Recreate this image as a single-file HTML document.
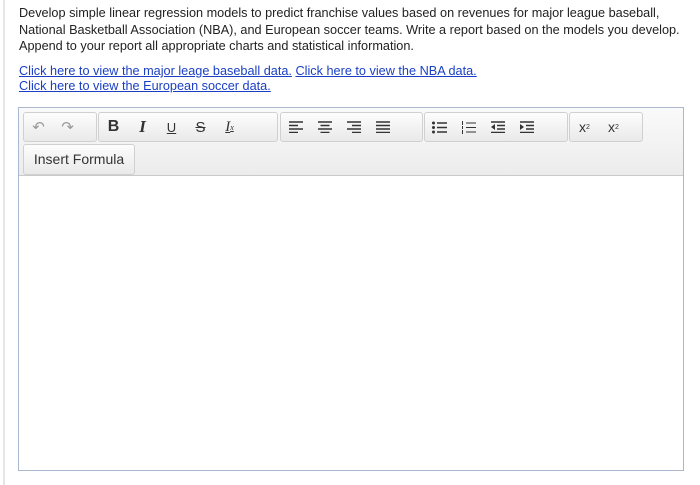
<!DOCTYPE html>
<html><head><style>
body{margin:0;width:700px;height:485px;background:#fff;position:relative;overflow:hidden;font-family:"Liberation Sans",Arial,sans-serif;}
.lb{position:absolute;left:3px;top:0;width:2px;height:485px;background:#e6e6e6}
.txt{position:absolute;left:19px;top:5px;font-size:12.7px;line-height:16.5px;color:#222;white-space:nowrap}
.links{position:absolute;left:19px;top:64px;font-size:12.7px;line-height:15px;color:#1a3fc4;white-space:nowrap}
.links span{text-decoration:underline}
.ed{position:absolute;left:18px;top:107px;width:664px;height:362px;border:1px solid #a9b8cc;background:#fff}
.tb{position:absolute;left:0;top:0;width:664px;height:67px;background:linear-gradient(#fafafa,#ececec);border-bottom:1px solid #c9c9c9}
.g{position:absolute;top:4px;height:28px;border:1px solid #d0d0d0;border-radius:3px;background:linear-gradient(#fdfdfd,#e9e9e9);display:flex;font-size:15px;color:#333}
.g div{width:29px;height:28px;display:flex;align-items:center;justify-content:center}
.f{position:absolute;left:4px;top:36px;width:110px;height:29px;border:1px solid #d0d0d0;border-radius:3px;background:linear-gradient(#fdfdfd,#e9e9e9);font-size:14px;color:#333;line-height:29px;text-align:center}
svg{display:block}
</style></head><body>
<div class="lb"></div>
<div class="txt">Develop simple linear regression models to predict franchise values based on revenues for major league baseball,<br>National Basketball Association (NBA), and European soccer teams. Write a report based on the models you develop.<br>Append to your report all appropriate charts and statistical information.</div>
<div class="links"><span>Click here to view the major leage baseball data.</span> <span>Click here to view the NBA data.</span><br><span>Click here to view the European soccer data.</span></div>
<div class="ed"><div class="tb">
<div class="g" style="left:4px;width:72px;color:#999"><div>&#x21B6;</div><div>&#x21B7;</div></div>
<div class="g" style="left:79px;width:178px"><div style="font-weight:bold;font-size:16px">B</div><div style="font-style:italic;font-family:'Liberation Serif';font-weight:bold;font-size:17px">I</div><div style="text-decoration:underline;font-size:13px">U</div><div style="text-decoration:line-through">S</div><div style="font-style:italic;font-family:'Liberation Serif';text-decoration:underline">I<sub style="font-size:8px">x</sub></div><div></div></div>
<div class="g" style="left:261px;width:141px">
<div><svg width="14" height="12" stroke="#333" stroke-width="1.6"><path d="M0 1h14M0 4.5h9M0 8h14M0 11.5h9"/></svg></div>
<div><svg width="14" height="12" stroke="#333" stroke-width="1.6"><path d="M0 1h14M2.5 4.5h9M0 8h14M2.5 11.5h9"/></svg></div>
<div><svg width="14" height="12" stroke="#333" stroke-width="1.6"><path d="M0 1h14M5 4.5h9M0 8h14M5 11.5h9"/></svg></div>
<div><svg width="14" height="12" stroke="#333" stroke-width="1.6"><path d="M0 1h14M0 4.5h14M0 8h14M0 11.5h14"/></svg></div></div>
<div class="g" style="left:405px;width:142px">
<div><svg width="15" height="13" stroke="#333" stroke-width="1.6"><path d="M5 2h10M5 6.5h10M5 11h10"/><circle cx="1.5" cy="2" r="1.5" fill="#333" stroke="none"/><circle cx="1.5" cy="6.5" r="1.5" fill="#333" stroke="none"/><circle cx="1.5" cy="11" r="1.5" fill="#333" stroke="none"/></svg></div>
<div><svg width="15" height="13" stroke="#333" stroke-width="1.6"><path d="M5 2h10M5 6.5h10M5 11h10M1.5 0v4M1.5 5v3M1.5 9v4" stroke-width="1"/></svg></div>
<div><svg width="14" height="12" stroke="#333" stroke-width="1.6"><path d="M0 1h14M6 4.5h8M6 8h8M0 11.5h14"/><path d="M4 3v6L0 6z" fill="#333" stroke="none"/></svg></div>
<div><svg width="14" height="12" stroke="#333" stroke-width="1.6"><path d="M0 1h14M6 4.5h8M6 8h8M0 11.5h14"/><path d="M0 3v6L4 6z" fill="#333" stroke="none"/></svg></div></div>
<div class="g" style="left:550px;width:72px;font-size:14px"><div>x<sub style="font-size:7px">2</sub></div><div>x<sup style="font-size:7px">2</sup></div></div>
<div class="f">Insert Formula</div>
</div></div>
</body></html>
